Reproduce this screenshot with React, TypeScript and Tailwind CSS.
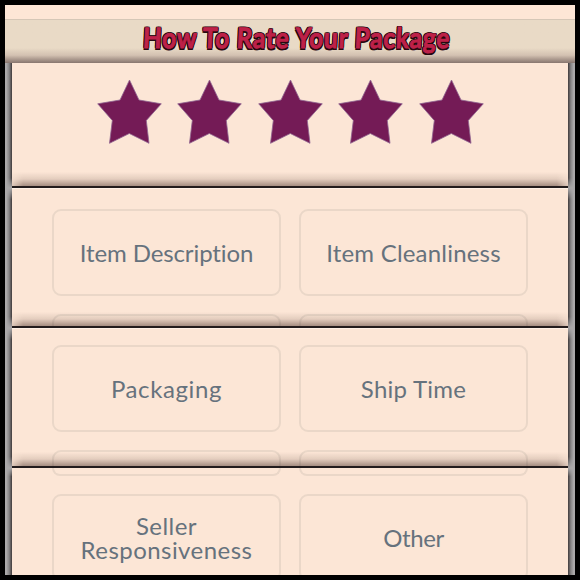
import React from "react";

const stars = [1, 2, 3, 4, 5];

const Star = () => {
  return (
    <svg
      className="h-[66px] w-[65px]"
      viewBox="0 0 65 66"
      fill="#741b56"
      stroke="#8f6490"
      strokeWidth="0.8"
    >
      <path d="M32.5 1 L42 21 L64.3 24.8 L49.3 41.5 L52 64.3 L32.3 54.5 L12.5 64.3 L15.3 41.5 L0.7 24.8 L23 21 Z" />
    </svg>
  );
};

const Card = ({
  label,
  tracking,
}: {
  label: string;
  tracking?: string;
}) => {
  return (
    <div className="flex h-[87px] w-[229px] shrink-0 items-center justify-center rounded-[9px] border-2 border-[#ead7c8] text-center text-[24px] leading-[24px] whitespace-pre-line text-[#66727d] [font-variant-ligatures:none]">
      <span className={tracking}>{label}</span>
    </div>
  );
};

const Shade = () => {
  return (
    <div className="absolute inset-x-0 bottom-0">
      <div className="h-[14px] bg-linear-to-b from-[#59403800] via-[#59403826] to-[#59403888] mask-x-from-98% mask-x-to-[#00000055]" />
      <div className="h-[2px] bg-[#231c1d]" />
    </div>
  );
};

const Peek = () => {
  return (
    <div className="mt-[18px] flex gap-[18px]">
      <div className="h-[27px] w-[229px] rounded-[9px] border-2 border-[#ead7c8]" />
      <div className="h-[27px] w-[229px] rounded-[9px] border-2 border-[#ead7c8]" />
    </div>
  );
};

// the dark edge of each side lightens where two panels meet
const Gutter = ({ side }: { side: string }) => {
  return (
    <div className={`flex w-[7px] flex-col bg-[#aaa8a9] ${side}`}>
      <div className="h-[125px] mask-b-from-92% bg-linear-to-r from-[#aaa8a9] from-20% via-[#858384] via-60% to-[#403b3c]" />
      <div className="h-[140px] mask-y-from-92% bg-linear-to-r from-[#aaa8a9] from-20% via-[#858384] via-60% to-[#403b3c]" />
      <div className="h-[140px] mask-y-from-92% bg-linear-to-r from-[#aaa8a9] from-20% via-[#858384] via-60% to-[#403b3c]" />
      <div className="h-[107px] mask-t-from-92% bg-linear-to-r from-[#aaa8a9] from-20% via-[#858384] via-60% to-[#403b3c]" />
    </div>
  );
};

const App = () => {
  return (
    <div className="h-[580px] w-[580px] overflow-hidden bg-black p-[5px] font-['Lato',sans-serif]">
      <div className="flex h-[570px] flex-col overflow-hidden bg-[#fde6d6]">
        <div className="h-[14px] shrink-0" />
        <header className="flex h-[44px] shrink-0 justify-center border-t border-[#d5c7b7] bg-linear-to-b from-[#e9dac6] from-65% via-[#d3c1b1] via-82% to-[#88766f]">
          <h1 className="ml-[14px] h-[36px] origin-center scale-y-[1.15] -skew-x-3 text-[24.5px] leading-[35px] font-bold tracking-[0.75px] whitespace-nowrap text-[#bd2148] [-webkit-text-stroke:0.8px_#bd2148] [text-shadow:1.2px_0_#26070f,-1.2px_0_#26070f,0_1.2px_#26070f,0_-1.2px_#26070f,1px_1px_#26070f,-1px_-1px_#26070f,1px_-1px_#26070f,-1px_1px_#26070f]">
            How To Rate Your Package
          </h1>
        </header>

        <main className="flex h-[512px] shrink-0">
          <Gutter side="" />
          <div className="w-[556px] bg-[#fce6d6]">
            <section className="relative flex h-[125px] justify-center gap-[15.5px] overflow-hidden pt-[16px]">
              {stars.map((star) => (
                <Star key={star} />
              ))}
              <Shade />
            </section>

            <section className="relative h-[140px] overflow-hidden border-t border-[#fff1e6] pt-[20px] pl-[40px]">
              <div className="flex gap-[18px]">
                <Card label="Item Description" tracking="tracking-[-0.1px]" />
                <Card label="Item Cleanliness" tracking="tracking-[0.2px]" />
              </div>
              <Peek />
              <Shade />
            </section>

            <section className="relative h-[140px] overflow-hidden border-t border-[#fff1e6] pt-[16px] pl-[40px]">
              <div className="flex gap-[18px]">
                <Card label="Packaging" tracking="tracking-[0.6px]" />
                <Card label="Ship Time" tracking="tracking-[0.25px]" />
              </div>
              <Peek />
              <Shade />
            </section>

            <section className="h-[107px] overflow-hidden pl-[40px]">
              <div className="flex gap-[18px]">
                <div className="h-[8px] w-[229px] rounded-b-[9px] border-2 border-t-0 border-[#ead7c8]" />
                <div className="h-[8px] w-[229px] rounded-b-[9px] border-2 border-t-0 border-[#ead7c8]" />
              </div>
              <div className="mt-[18px] flex gap-[18px]">
                <Card
                  label={"Seller\nResponsiveness"}
                  tracking="tracking-[0.45px]"
                />
                <Card label="Other" tracking="tracking-[-0.4px]" />
              </div>
            </section>
          </div>
          <Gutter side="-scale-x-100" />
        </main>
      </div>
    </div>
  );
};

export default App;
